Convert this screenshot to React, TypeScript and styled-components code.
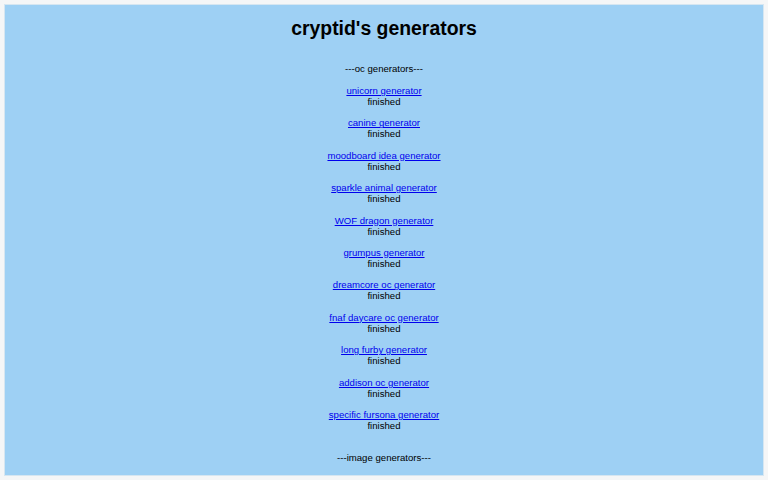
import React from 'react';
import styled, { createGlobalStyle } from 'styled-components';

const GlobalStyle = createGlobalStyle`
    html, body {
        margin: 0;
        padding: 0;
        background: #f5f6f7;
        font-family: "Liberation Sans", Arial, sans-serif;
    }
`;

const Panel = styled.div`
    box-sizing: border-box;
    margin: 4px;
    height: 472px;
    overflow: hidden;
    background: #9ed0f4;
    border: 1px solid #d6e6f1;
    text-align: center;
    color: #000;
    font-size: 9.6px;
    line-height: 11px;
`;

const Title = styled.h1`
    margin: 11px 0 23px;
    font-size: 19.4px;
    line-height: 24px;
    font-weight: bold;
`;

const Heading = styled.div<{ gap: number }>`
    margin-top: ${({ gap }) => gap}px;
    margin-bottom: 11px;
`;

const Entry = styled.div`
    margin-bottom: 10.4px;
`;

const EntryLink = styled.a`
    color: #0000ee;
    text-decoration: underline;
    cursor: pointer;
`;

const ocGenerators = [
    'unicorn generator',
    'canine generator',
    'moodboard idea generator',
    'sparkle animal generator',
    'WOF dragon generator',
    'grumpus generator',
    'dreamcore oc generator',
    'fnaf daycare oc generator',
    'long furby generator',
    'addison oc generator',
    'specific fursona generator',
];

export default function App() {
    return (
        <>
            <GlobalStyle />
            <Panel>
                <Title>cryptid's generators</Title>
                <Heading gap={0}>---oc generators---</Heading>
                {ocGenerators.map((name) => (
                    <Entry key={name}>
                        <EntryLink>{name}</EntryLink>
                        <br />
                        finished
                    </Entry>
                ))}
                <Heading gap={21.5}>---image generators---</Heading>
            </Panel>
        </>
    );
}
